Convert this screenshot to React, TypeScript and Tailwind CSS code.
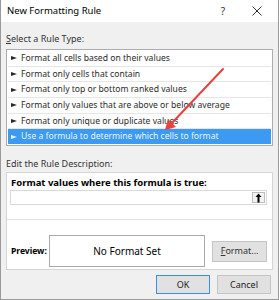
import React from 'react';

const rules = [
  'Format all cells based on their values',
  'Format only cells that contain',
  'Format only top or bottom ranked values',
  'Format only values that are above or below average',
  'Format only unique or duplicate values',
  'Use a formula to determine which cells to format',
];

export default function App() {
  const selected = 5;

  return (
    <div
      className="relative w-[279px] h-[300px] bg-[#f0f0f0] border-x border-b border-[#9a9a9a] text-[9px] text-[#1a1a1a] overflow-hidden"
      style={{ fontFamily: '"Noto Sans", "Open Sans", sans-serif' }}
    >
      {/* title bar */}
      <div className="h-[22px] bg-white flex items-center pl-[6px]">
        <span className="text-[9.5px] text-black leading-none">New Formatting Rule</span>
        <span className="ml-auto mr-[27px] text-[10px] leading-none text-[#333]">?</span>
        <svg width="10" height="10" viewBox="0 0 10 10" className="mr-[16px]">
          <path d="M0.5 0.5 L9.5 9.5 M9.5 0.5 L0.5 9.5" stroke="#333" strokeWidth="1" />
        </svg>
      </div>

      <div className="px-[5px]">
        <div className="pt-[10px] leading-[14px] text-[#333]">
          <span className="underline">S</span>elect a Rule Type:
        </div>

        {/* rule list */}
        <div className="mt-[3px] h-[97px] bg-white border border-[#adadad] p-[1px] flex flex-col">
          {rules.map((r, i) => (
            <div
              key={r}
              className={
                i === selected
                  ? 'flex-1 flex items-center pl-[3px] bg-[#3d9af3] text-[#eaf3ff]'
                  : 'flex-1 flex items-center pl-[3px] border-b border-[#e6e6e6] text-[#2a2a2a]'
              }
            >
              <svg width="6" height="4" viewBox="0 0 6 4" className="mr-[4px]">
                <path d="M0 0 L6 2 L0 4 Z" fill="currentColor" />
              </svg>
              <span className="leading-none whitespace-nowrap text-[8.6px]">{r}</span>
            </div>
          ))}
        </div>

        <div className="mt-[11px] leading-[14px] text-[#333]">Edit the Rule Description:</div>

        {/* description box */}
        <div className="mt-px h-[98px] bg-white border border-[#d5d5d5] flex flex-col">
          <div className="pl-[3px] pr-[5px] pt-[3px]">
            <div className="pl-px leading-[14px] font-bold text-[9.5px] text-black">Format values where this formula is true:</div>
            <div className="h-[15px] border border-[#d9d9d9] flex justify-end items-stretch">
              <div className="w-[13px] border border-[#bdbdbd] bg-[#f2f2f2] flex items-center justify-center m-px">
                <svg width="7" height="10" viewBox="0 0 7 10">
                  <path d="M3.5 0.5 L0.5 4 H2.5 V9.5 H4.5 V4 H6.5 Z" fill="#000" />
                </svg>
              </div>
            </div>
          </div>
          <div className="mt-[14px] border-t border-[#e0e0e0]" />
          <div className="flex items-center pl-[4px] pr-[5px] mt-[15px]">
            <div className="w-[38px] font-bold text-[8.5px] text-black whitespace-nowrap">Preview:</div>
            <div className="w-[157px] h-[32px] border border-[#a9a9a9] bg-white flex items-center justify-center text-[10px] text-black">
              No Format Set
            </div>
            <button className="ml-[7px] w-[55px] h-[21px] bg-[#e1e1e1] border border-[#c4c4c4] text-[9px] text-[#333]">
              <span className="underline">F</span>ormat...
            </button>
          </div>
        </div>

        {/* footer buttons */}
        <div className="flex justify-end gap-[7px] pr-[2px] mt-[5px]">
          <button className="w-[54px] h-[19px] bg-[#e1e1e1] border border-[#3c8fdc] text-[9px] text-[#222]">OK</button>
          <button className="w-[54px] h-[19px] bg-[#e1e1e1] border border-[#c4c4c4] text-[9px] text-[#222]">Cancel</button>
        </div>
      </div>

      {/* red annotation arrow */}
      <svg className="absolute left-0 top-0 pointer-events-none" width="279" height="300" viewBox="0 0 279 300">
        <line x1="222" y1="69" x2="170" y2="124" stroke="#e8423d" strokeWidth="2" strokeLinecap="round" />
        <path d="M164 130 L167 119 L175 127 Z" fill="#e8423d" />
      </svg>
    </div>
  );
}
